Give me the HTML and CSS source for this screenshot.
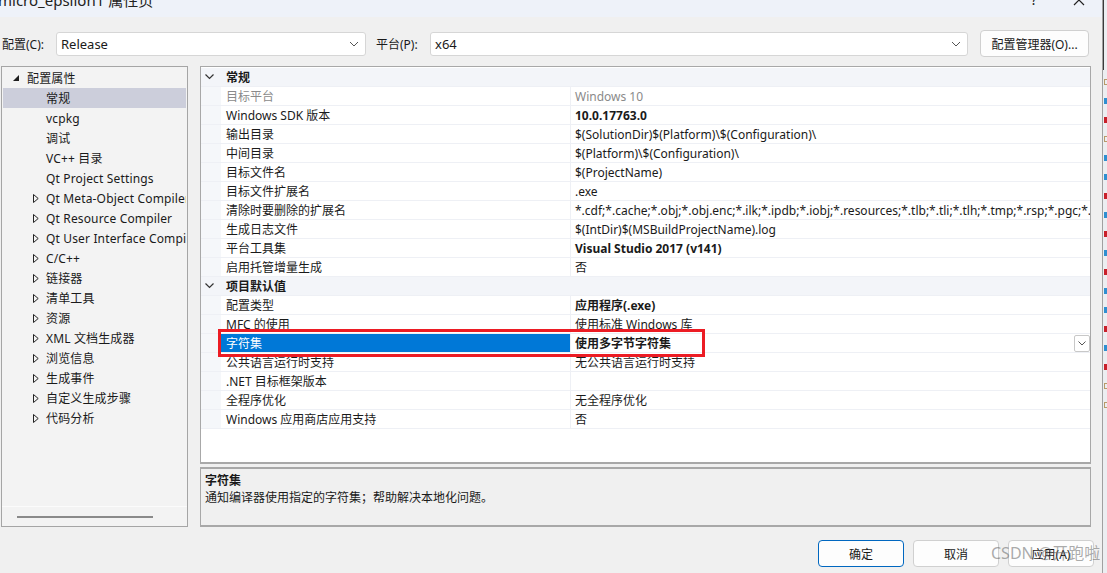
FILE: index.html
```html
<!DOCTYPE html>
<html>
<head>
  <title>micro_epsilon1 属性页</title>
  <link rel="stylesheet" href="styles.css">
</head>
<body>
  <div class="screen">
    <div class="dialog">
      <div class="titlebar">
        <span class="title">micro_epsilon1 属性页</span>
        <span class="help">?</span>
        <svg class="close" width="12" height="12" viewBox="0 0 12 12"><path d="M1 -5 L11 5 M11 -5 L1 5" stroke="#222" stroke-width="1.2" fill="none"/></svg>
      </div>

      <div class="toolbar">
        <label class="tb-label first">配置(C):</label>
        <div class="combo combo-config">
          <span>Release</span>
          <svg width="10" height="6" viewBox="0 0 10 6"><polyline points="1,1 5,5 9,1" stroke="#555" fill="none"/></svg>
        </div>
        <label class="tb-label">平台(P):</label>
        <div class="combo combo-platform">
          <span>x64</span>
          <svg width="10" height="6" viewBox="0 0 10 6"><polyline points="1,1 5,5 9,1" stroke="#555" fill="none"/></svg>
        </div>
        <button class="btn btn-manager">配置管理器(O)...</button>
      </div>

      <div class="main">
        <div class="tree-panel">
          <ul class="tree">
            <li class="tree-item level0"><span class="twisty"><svg width="6" height="6" viewBox="0 0 6 6"><polygon points="6,0 6,6 0,6" fill="#1e1e1e"/></svg></span>配置属性</li>
            <li class="tree-item level1 selected"><span class="twisty"></span>常规</li>
            <li class="tree-item level1"><span class="twisty"></span>vcpkg</li>
            <li class="tree-item level1"><span class="twisty"></span>调试</li>
            <li class="tree-item level1"><span class="twisty"></span>VC++ 目录</li>
            <li class="tree-item level1"><span class="twisty"></span>Qt Project Settings</li>
            <li class="tree-item level1"><span class="twisty"><svg class="tri" width="6" height="9" viewBox="0 0 6 9"><polygon points="0.5,0.5 5.2,4.5 0.5,8.5" stroke="#222" fill="none"/></svg></span>Qt Meta-Object Compiler</li>
            <li class="tree-item level1"><span class="twisty"><svg class="tri" width="6" height="9" viewBox="0 0 6 9"><polygon points="0.5,0.5 5.2,4.5 0.5,8.5" stroke="#222" fill="none"/></svg></span>Qt Resource Compiler</li>
            <li class="tree-item level1"><span class="twisty"><svg class="tri" width="6" height="9" viewBox="0 0 6 9"><polygon points="0.5,0.5 5.2,4.5 0.5,8.5" stroke="#222" fill="none"/></svg></span>Qt User Interface Compiler</li>
            <li class="tree-item level1"><span class="twisty"><svg class="tri" width="6" height="9" viewBox="0 0 6 9"><polygon points="0.5,0.5 5.2,4.5 0.5,8.5" stroke="#222" fill="none"/></svg></span>C/C++</li>
            <li class="tree-item level1"><span class="twisty"><svg class="tri" width="6" height="9" viewBox="0 0 6 9"><polygon points="0.5,0.5 5.2,4.5 0.5,8.5" stroke="#222" fill="none"/></svg></span>链接器</li>
            <li class="tree-item level1"><span class="twisty"><svg class="tri" width="6" height="9" viewBox="0 0 6 9"><polygon points="0.5,0.5 5.2,4.5 0.5,8.5" stroke="#222" fill="none"/></svg></span>清单工具</li>
            <li class="tree-item level1"><span class="twisty"><svg class="tri" width="6" height="9" viewBox="0 0 6 9"><polygon points="0.5,0.5 5.2,4.5 0.5,8.5" stroke="#222" fill="none"/></svg></span>资源</li>
            <li class="tree-item level1"><span class="twisty"><svg class="tri" width="6" height="9" viewBox="0 0 6 9"><polygon points="0.5,0.5 5.2,4.5 0.5,8.5" stroke="#222" fill="none"/></svg></span>XML 文档生成器</li>
            <li class="tree-item level1"><span class="twisty"><svg class="tri" width="6" height="9" viewBox="0 0 6 9"><polygon points="0.5,0.5 5.2,4.5 0.5,8.5" stroke="#222" fill="none"/></svg></span>浏览信息</li>
            <li class="tree-item level1"><span class="twisty"><svg class="tri" width="6" height="9" viewBox="0 0 6 9"><polygon points="0.5,0.5 5.2,4.5 0.5,8.5" stroke="#222" fill="none"/></svg></span>生成事件</li>
            <li class="tree-item level1"><span class="twisty"><svg class="tri" width="6" height="9" viewBox="0 0 6 9"><polygon points="0.5,0.5 5.2,4.5 0.5,8.5" stroke="#222" fill="none"/></svg></span>自定义生成步骤</li>
            <li class="tree-item level1"><span class="twisty"><svg class="tri" width="6" height="9" viewBox="0 0 6 9"><polygon points="0.5,0.5 5.2,4.5 0.5,8.5" stroke="#222" fill="none"/></svg></span>代码分析</li>
          </ul>
          <div class="hscroll"><div class="hthumb"></div></div>
        </div>

        <div class="right-col">
          <div class="grid">
            <div class="row section">
              <span class="gutter"><svg width="9" height="6" viewBox="0 0 9 6"><polyline points="0.5,0.5 4.5,4.5 8.5,0.5" stroke="#333" stroke-width="1.2" fill="none"/></svg></span>
              <span class="name">常规</span>
            </div>
            <div class="row disabled"><span class="gutter"></span><span class="name">目标平台</span><span class="value">Windows 10</span></div>
            <div class="row"><span class="gutter"></span><span class="name">Windows SDK 版本</span><span class="value bold">10.0.17763.0</span></div>
            <div class="row"><span class="gutter"></span><span class="name">输出目录</span><span class="value">$(SolutionDir)$(Platform)\$(Configuration)\</span></div>
            <div class="row"><span class="gutter"></span><span class="name">中间目录</span><span class="value">$(Platform)\$(Configuration)\</span></div>
            <div class="row"><span class="gutter"></span><span class="name">目标文件名</span><span class="value">$(ProjectName)</span></div>
            <div class="row"><span class="gutter"></span><span class="name">目标文件扩展名</span><span class="value">.exe</span></div>
            <div class="row"><span class="gutter"></span><span class="name">清除时要删除的扩展名</span><span class="value">*.cdf;*.cache;*.obj;*.obj.enc;*.ilk;*.ipdb;*.iobj;*.resources;*.tlb;*.tli;*.tlh;*.tmp;*.rsp;*.pgc;*.pgd;*.meta;*.tlog;*.manifest;*.res;*.pch;*.exp;*.idb;*.rep;*.xdc;*.pdb</span></div>
            <div class="row"><span class="gutter"></span><span class="name">生成日志文件</span><span class="value">$(IntDir)$(MSBuildProjectName).log</span></div>
            <div class="row"><span class="gutter"></span><span class="name">平台工具集</span><span class="value bold">Visual Studio 2017 (v141)</span></div>
            <div class="row"><span class="gutter"></span><span class="name">启用托管增量生成</span><span class="value">否</span></div>
            <div class="row section">
              <span class="gutter"><svg width="9" height="6" viewBox="0 0 9 6"><polyline points="0.5,0.5 4.5,4.5 8.5,0.5" stroke="#333" stroke-width="1.2" fill="none"/></svg></span>
              <span class="name">项目默认值</span>
            </div>
            <div class="row"><span class="gutter"></span><span class="name">配置类型</span><span class="value bold">应用程序(.exe)</span></div>
            <div class="row"><span class="gutter"></span><span class="name">MFC 的使用</span><span class="value">使用标准 Windows 库</span></div>
            <div class="row"><span class="gutter"></span><span class="name selected">字符集</span><span class="value bold">使用多字节字符集<span class="drop"><svg width="8" height="5" viewBox="0 0 8 5"><polyline points="0.5,0.5 4,4 7.5,0.5" stroke="#555" fill="none"/></svg></span></span></div>
            <div class="row"><span class="gutter"></span><span class="name">公共语言运行时支持</span><span class="value">无公共语言运行时支持</span></div>
            <div class="row"><span class="gutter"></span><span class="name">.NET 目标框架版本</span><span class="value"></span></div>
            <div class="row"><span class="gutter"></span><span class="name">全程序优化</span><span class="value">无全程序优化</span></div>
            <div class="row"><span class="gutter"></span><span class="name">Windows 应用商店应用支持</span><span class="value">否</span></div>
            <div class="annotation"></div>
          </div>
          <div class="desc">
            <div class="desc-title">字符集</div>
            <div class="desc-text">通知编译器使用指定的字符集；帮助解决本地化问题。</div>
          </div>
        </div>
      </div>

      <div class="footer">
        <button class="btn btn-ok">确定</button>
        <button class="btn">取消</button>
        <button class="btn">应用(A)</button>
        <span class="watermark">CSDN @开跑啦</span>
      </div>
    </div>

    <div class="behind">
      <div class="behind-top"></div>
      <span class="mark tan"></span>
      <span class="mark blue"></span>
      <span class="mark red"></span>
      <span class="mark tan"></span>
      <span class="mark blue"></span>
      <span class="mark blue"></span>
      <span class="mark red"></span>
      <span class="mark blue"></span>
      <span class="mark red"></span>
      <span class="mark blue"></span>
      <span class="mark red"></span>
      <span class="mark blue"></span>
      <span class="mark blue"></span>
      <span class="mark red"></span>
      <span class="mark blue"></span>
      <span class="mark red"></span>
      <span class="mark tan"></span>
      <span class="mark tan"></span>
    </div>
  </div>
</body>
</html>
```

FILE: styles.css
```css
body {
  margin: 0;
  width: 1107px;
  height: 573px;
  overflow: hidden;
  font-family: "Noto Sans", "Noto Sans CJK SC", sans-serif;
  font-size: 12px;
  color: #1a1a1a;
  background-color: #f0f0f0;
}

.screen {
  display: flex;
  height: 573px;
}

.dialog {
  width: 1102px;
  flex: none;
  display: flex;
  flex-direction: column;
}

/* title bar, cut off at the top of the shot */
.titlebar {
  height: 17px;
  display: flex;
  align-items: flex-start;
  overflow: hidden;
  background-color: #eef2f9;
}

.title {
  font-size: 15px;
  line-height: 15px;
  margin-top: -7px;
  margin-left: -2px;
  color: #222;
}

.help {
  margin-left: auto;
  font-size: 14px;
  line-height: 14px;
  margin-top: -7px;
  color: #222;
}

.close {
  margin-left: 36px;
  margin-right: 17px;
}

/* config / platform row */
.toolbar {
  display: flex;
  align-items: center;
  height: 27px;
  margin-top: 13px;
}

.tb-label {
  width: 54px;
  margin-left: 10px;
  white-space: nowrap;
}

.tb-label.first {
  width: 54px;
  margin-left: 0;
  padding-left: 2px;
}

.combo {
  height: 24px;
  box-sizing: border-box;
  display: flex;
  align-items: center;
  justify-content: space-between;
  padding: 0 6px 0 4px;
  border: 1px solid #d6d6d6;
  border-radius: 3px;
  background-color: #fff;
  font-size: 13px;
}

.combo-config {
  width: 310px;
}

.combo-platform {
  width: 538px;
}

.btn {
  font-family: inherit;
  font-size: 12px;
  color: #1a1a1a;
  height: 27px;
  padding: 0;
  background-color: #fdfdfd;
  border: 1px solid #d0d0d0;
  border-radius: 4px;
}

.btn-manager {
  width: 109px;
  margin-left: 12px;
}

/* main area */
.main {
  display: flex;
  height: 461px;
  margin-top: 9px;
  padding-left: 1px;
}

.tree-panel {
  width: 187px;
  box-sizing: border-box;
  display: flex;
  flex-direction: column;
  border: 1px solid #a5a5a5;
  background-color: #f3f3f3;
}

.tree {
  flex: 1;
  list-style: none;
  margin: 0;
  padding: 1px 0 0;
  overflow: hidden;
}

.tree-item {
  height: 20px;
  margin: 0 1px;
  display: flex;
  align-items: center;
  white-space: nowrap;
  overflow: hidden;
  letter-spacing: 0.15px;
}

.tree-item.level0 {
  padding-left: 9px;
}

.tree-item.level1 {
  padding-left: 28px;
}

.tree-item.selected {
  background-color: #cccedb;
}

.twisty {
  width: 15px;
  flex: none;
  display: flex;
  align-items: center;
}

.twisty svg {
  margin-left: 1px;
}

.twisty .tri {
  margin-left: 2px;
}

.hscroll {
  height: 19px;
  border-top: 1px solid #fbfbfb;
  display: flex;
  align-items: center;
}

.hthumb {
  width: 136px;
  height: 2px;
  margin-left: 15px;
  background-color: #8a8a8a;
}

.right-col {
  width: 891px;
  margin-left: 12px;
  display: flex;
  flex-direction: column;
  gap: 3px;
}

/* property grid */
.grid {
  position: relative;
  height: 398px;
  box-sizing: border-box;
  padding-top: 1px;
  border: 1px solid #a8a8a8;
  border-bottom-width: 2px;
  background-color: #fff;
  overflow: hidden;
}

.row {
  display: grid;
  grid-template-columns: 20px 350px 1fr;
  height: 19px;
  box-sizing: border-box;
  border-bottom: 1px solid #eef0f5;
  line-height: 19px;
  overflow: hidden;
}

.gutter {
  background-color: #f5f7fa;
  display: flex;
  align-items: center;
}

.gutter svg {
  margin-left: 4px;
}

.name {
  padding-left: 5px;
  border-right: 1px solid #eef0f5;
  white-space: nowrap;
  overflow: hidden;
}

.name.selected {
  background-color: #0078d7;
  color: #fff;
}

.value {
  padding-left: 4px;
  display: flex;
  align-items: center;
  white-space: nowrap;
  overflow: hidden;
}

.bold {
  font-weight: bold;
}

.row.disabled .name,
.row.disabled .value {
  color: #8a8a8a;
}

.row.section {
  grid-template-columns: 20px 1fr;
  background-color: #f3f5f9;
}

.row.section .gutter {
  background-color: transparent;
}

.row.section .name {
  border-right: none;
  font-weight: bold;
}

.drop {
  margin-left: auto;
  width: 16px;
  height: 17px;
  box-sizing: border-box;
  display: flex;
  align-items: center;
  justify-content: center;
  border: 1px solid #c8c8c8;
  border-radius: 2px;
  background-color: #fff;
}

/* red box drawn on the screenshot */
.annotation {
  position: absolute;
  left: 17px;
  top: 262px;
  width: 487px;
  height: 28px;
  box-sizing: border-box;
  border: 3px solid #ec1c24;
}

.desc {
  height: 60px;
  box-sizing: border-box;
  padding: 3px 4px 0;
  border: 1px solid #a8a8a8;
  border-top-width: 2px;
  border-bottom-width: 2px;
  line-height: 17px;
}

.desc-title {
  font-weight: bold;
}

/* dialog buttons */
.footer {
  position: relative;
  display: flex;
  justify-content: flex-end;
  gap: 9px;
  margin-top: 13px;
  padding-right: 8px;
}

.footer .btn {
  width: 86px;
}

.btn-ok {
  border-color: #0067c0;
}

.watermark {
  position: absolute;
  z-index: 1;
  left: 991px;
  top: 3px;
  font-size: 16px;
  line-height: 20px;
  color: rgba(100, 100, 100, 0.55);
  white-space: nowrap;
}

/* edge of the window behind */
.behind {
  width: 5px;
  flex: none;
  display: flex;
  flex-direction: column;
  gap: 13px;
  border-left: 1px solid #a0a0a0;
  background-color: #eceef1;
  overflow: hidden;
}

.behind-top {
  height: 70px;
  margin-left: -1px;
  margin-bottom: -4px;
  border-left: 2px solid #3a3a3a;
}

.mark {
  width: 4px;
  height: 6px;
  flex: none;
  margin-left: 1px;
}

.mark.tan {
  border: 1px solid #b89a6a;
  box-sizing: border-box;
}

.mark.blue {
  background-color: #2f8fd0;
}

.mark.red {
  background-color: #c8202a;
}
```
